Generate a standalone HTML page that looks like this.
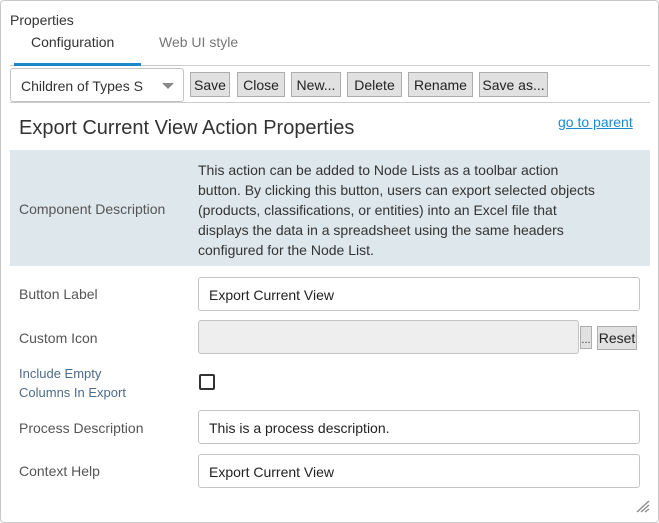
<!DOCTYPE html>
<html><head><style>
*{box-sizing:border-box;margin:0;padding:0}
body{width:659px;height:523px;background:#fff;font-family:"Liberation Sans",sans-serif;color:#333;position:relative;overflow:hidden}
.a{position:absolute;white-space:nowrap}
.frame{position:absolute;left:0;top:0;width:659px;height:523px;border:1px solid #c8c8c8;border-radius:4px}
.btn{position:absolute;top:72px;height:25px;background:#e1e1e1;border:1px solid #adadad;font-size:14px;line-height:25px;text-align:center;color:#222}
.lbl{position:absolute;left:19px;font-size:14px;color:#555}
.inp{position:absolute;left:198px;width:442px;height:34px;border:1px solid #c4c4c4;border-radius:3px;font-size:14px;line-height:34px;padding-left:10px;color:#222}
</style></head><body>
<div class="frame"></div>
<div class="a" style="left:10px;top:12px;font-size:14px;color:#333">Properties</div>
<div class="a" style="left:31px;top:34px;font-size:14px;color:#333">Configuration</div>
<div class="a" style="left:159px;top:34px;font-size:14px;color:#777">Web UI style</div>
<div class="a" style="left:10px;top:65px;width:640px;height:1px;background:#ccc"></div>
<div class="a" style="left:14px;top:63px;width:127px;height:3px;background:#1a88c9"></div>
<div class="a" style="left:10px;top:68px;width:174px;height:34px;border:1px solid #c4c4c4;border-radius:3px;font-size:14px;line-height:34px;padding-left:10px;color:#333">Children of Types S<span style="position:absolute;left:151px;top:14px;border-left:6px solid transparent;border-right:6px solid transparent;border-top:6px solid #888"></span></div>
<div class="btn" style="left:190px;width:40px">Save</div>
<div class="btn" style="left:237px;width:48px">Close</div>
<div class="btn" style="left:291px;width:50px">New...</div>
<div class="btn" style="left:347px;width:55px">Delete</div>
<div class="btn" style="left:408px;width:65px">Rename</div>
<div class="btn" style="left:479px;width:69px">Save as...</div>
<div class="a" style="left:10px;top:102px;width:640px;height:1px;background:#ccc"></div>
<div class="a" style="left:19px;top:117px;font-size:20px;color:#333">Export Current View Action Properties</div>
<div class="a" style="left:558px;top:114px;font-size:14px;color:#1a8ccc;text-decoration:underline">go to parent</div>
<div class="a" style="left:10px;top:150px;width:640px;height:116px;background:#dee7eb"></div>
<div class="lbl" style="top:201px">Component Description</div>
<div class="a" style="left:198px;top:160px;font-size:14px;line-height:20px;color:#333;white-space:normal;width:398px">This action can be added to Node Lists as a toolbar action button. By clicking this button, users can export selected objects (products, classifications, or entities) into an Excel file that displays the data in a spreadsheet using the same headers configured for the Node List.</div>
<div class="lbl" style="top:286px">Button Label</div>
<div class="inp" style="top:277px">Export Current View</div>
<div class="lbl" style="top:330px">Custom Icon</div>
<div class="inp" style="top:320px;width:381px;background:#eee"></div>
<div class="a" style="left:580px;top:326px;width:12px;height:23px;background:#e1e1e1;border:1px solid #adadad;font-size:11px;line-height:26px;text-align:center">...</div>
<div class="btn" style="left:597px;top:326px;width:40px;height:24px;line-height:23px">Reset</div>
<div class="a" style="left:19px;top:364px;font-size:13px;line-height:19px;color:#4d6b8a">Include Empty<br>Columns In Export</div>
<div class="a" style="left:199px;top:374px;width:16px;height:16px;border:2px solid #333;border-radius:2px"></div>
<div class="lbl" style="top:420px">Process Description</div>
<div class="inp" style="top:410px">This is a process description.</div>
<div class="lbl" style="top:463px">Context Help</div>
<div class="inp" style="top:454px">Export Current View</div>
<svg class="a" style="left:636px;top:500px" width="14" height="13"><path d="M13 1L1 12M13 5L5 12M13 9L9 12" stroke="#888" stroke-width="1.3"/></svg>
</body></html>
